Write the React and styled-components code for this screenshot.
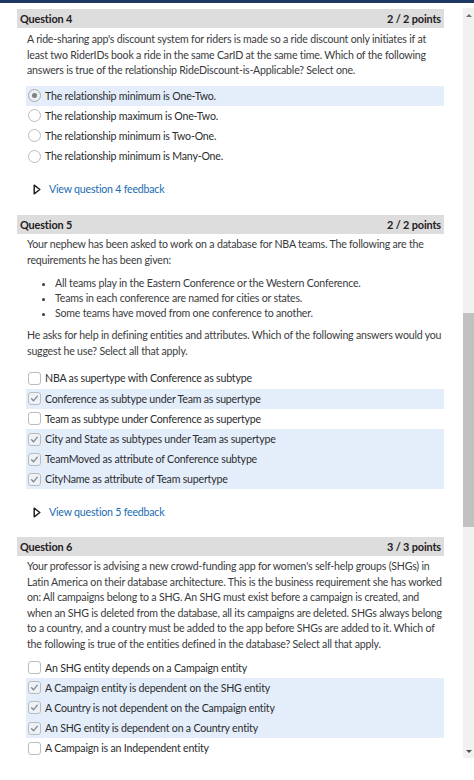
import React from "react";
import styled, { createGlobalStyle } from "styled-components";

const GlobalStyle = createGlobalStyle`
  html, body { margin: 0; padding: 0; background: #ffffff; }
  body {
    font-family: Lato, "Noto Sans", "Liberation Sans", sans-serif;
    color: #3a3b3d;
    overflow: hidden;
  }
`;

const Page = styled.div`
  width: 474px;
  height: 780px;
  display: flex;
  flex-direction: column;
  overflow: hidden;
  background: #fff;
`;

const TopBar = styled.div`
  height: 3px;
  flex: none;
  background: #1d3763;
`;

const Body = styled.div`
  flex: 1;
  display: flex;
  min-height: 0;
`;

const Content = styled.main`
  flex: 1;
  padding: 6px 19px 0 17px;
  overflow: hidden;
  font-size: 10.6px;
  letter-spacing: -0.2px;
`;

const Question = styled.section`
  margin-bottom: ${(p) => p.$gap || 17}px;
`;

const Header = styled.div`
  height: 19px;
  display: flex;
  align-items: center;
  justify-content: space-between;
  padding: 0 3px;
  background: #dddddd;
  font-size: 10.9px;
  letter-spacing: -0.15px;
  font-weight: 700;
  color: #1f2022;
`;

const QBody = styled.div`
  padding: ${(p) => p.$pt || 3}px 0 0 9px;
`;

const Para = styled.p`
  margin: 0 0 ${(p) => p.$mb || 5}px 1px;
  line-height: 15.5px;
  color: #3a3b3d;
`;

const Bullets = styled.ul`
  margin: 8px 0 8px 0;
  padding-left: 29px;
  line-height: 14.7px;
  color: #3a3b3d;
`;

const Options = styled.div`
  display: flex;
  flex-direction: column;
`;

const Row = styled.label`
  display: flex;
  align-items: center;
  gap: 4px;
  height: 20.2px;
  padding-left: 2px;
  background: ${(p) => (p.$on ? "#e4eefa" : "transparent")};
  color: #2b2c2e;
`;

const Radio = styled.span`
  width: 13px;
  height: 13px;
  box-sizing: border-box;
  border-radius: 50%;
  border: 1px solid ${(p) => (p.$on ? "#a4a8ad" : "#b9bcbf")};
  background: ${(p) => (p.$on ? "#edf0f3" : "#fff")};
  display: flex;
  align-items: center;
  justify-content: center;
  flex: none;
`;

const Dot = styled.span`
  width: 5px;
  height: 5px;
  border-radius: 50%;
  background: #7b8086;
`;

const Box = styled.span`
  width: 13px;
  height: 13px;
  box-sizing: border-box;
  border-radius: 3px;
  border: 1px solid #b9bcbf;
  background: ${(p) => (p.$on ? "#eef1f5" : "#fff")};
  display: flex;
  align-items: center;
  justify-content: center;
  flex: none;
`;

const Feedback = styled.div`
  display: flex;
  align-items: center;
  gap: 8px;
  margin: 15px 0 0 7px;
  height: 16px;
  color: #1a6bb3;
`;

const Scrollbar = styled.div`
  width: 11px;
  flex: none;
  margin-top: 5px;
  margin-bottom: 22px;
  background: #f1f1f1;
  display: flex;
  flex-direction: column;
`;

const Arrow = styled.div`
  height: 14px;
  flex: none;
  display: flex;
  align-items: center;
  justify-content: center;
  &::before {
    content: "";
    width: 0;
    height: 0;
    border-left: 3px solid transparent;
    border-right: 3px solid transparent;
    ${(p) =>
      p.$down
        ? "border-top: 3px solid #505050;"
        : "border-bottom: 3px solid #707070;"}
  }
`;

const Track = styled.div`
  flex: 1;
  display: flex;
  flex-direction: column;
`;

const Thumb = styled.div`
  margin-top: ${(p) => p.$top}px;
  height: ${(p) => p.$h}px;
  background: #c1c1c1;
`;

const Check = () => (
  <svg width="9" height="9" viewBox="0 0 9 9">
    <polyline
      points="1.6,4.8 3.5,6.8 7.4,2.2"
      fill="none"
      stroke="#7d8893"
      strokeWidth="1.3"
      strokeLinecap="round"
      strokeLinejoin="round"
    />
  </svg>
);

const Tri = () => (
  <svg width="8" height="11" viewBox="0 0 8 11">
    <polygon
      points="1.2,1.2 6.8,5.5 1.2,9.8"
      fill="none"
      stroke="#202124"
      strokeWidth="1.5"
      strokeLinejoin="round"
    />
  </svg>
);

const RadioRow = ({ on, children }) => (
  <Row $on={on}>
    <Radio $on={on}>{on && <Dot />}</Radio>
    {children}
  </Row>
);

const CheckRow = ({ on, children }) => (
  <Row $on={on}>
    <Box $on={on}>{on && <Check />}</Box>
    {children}
  </Row>
);

export default function App() {
  return (
    <>
      <GlobalStyle />
      <Page>
        <TopBar />
        <Body>
          <Content>
            <Question $gap={18}>
              <Header>
                <span>Question 4</span>
                <span>2 / 2 points</span>
              </Header>
              <QBody $pt={4}>
                <Para $mb={7}>
                  A ride-sharing app's discount system for riders is made so a
                  ride discount only initiates if at least two RiderIDs book a
                  ride in the same CarID at the same time. Which of the
                  following answers is true of the relationship
                  RideDiscount-is-Applicable? Select one.
                </Para>
                <Options>
                  <RadioRow on>The relationship minimum is One-Two.</RadioRow>
                  <RadioRow>The relationship maximum is One-Two.</RadioRow>
                  <RadioRow>The relationship minimum is Two-One.</RadioRow>
                  <RadioRow>The relationship minimum is Many-One.</RadioRow>
                </Options>
                <Feedback>
                  <Tri />
                  <span>View question 4 feedback</span>
                </Feedback>
              </QBody>
            </Question>

            <Question $gap={17}>
              <Header>
                <span>Question 5</span>
                <span>2 / 2 points</span>
              </Header>
              <QBody>
                <Para $mb={0}>
                  Your nephew has been asked to work on a database for NBA
                  teams. The following are the requirements he has been given:
                </Para>
                <Bullets>
                  <li>
                    All teams play in the Eastern Conference or the Western
                    Conference.
                  </li>
                  <li>Teams in each conference are named for cities or states.</li>
                  <li>Some teams have moved from one conference to another.</li>
                </Bullets>
                <Para $mb={9}>
                  He asks for help in defining entities and attributes. Which of
                  the following answers would you suggest he use? Select all
                  that apply.
                </Para>
                <Options>
                  <CheckRow>NBA as supertype with Conference as subtype</CheckRow>
                  <CheckRow on>Conference as subtype under Team as supertype</CheckRow>
                  <CheckRow>Team as subtype under Conference as supertype</CheckRow>
                  <CheckRow on>City and State as subtypes under Team as supertype</CheckRow>
                  <CheckRow on>TeamMoved as attribute of Conference subtype</CheckRow>
                  <CheckRow on>CityName as attribute of Team supertype</CheckRow>
                </Options>
                <Feedback>
                  <Tri />
                  <span>View question 5 feedback</span>
                </Feedback>
              </QBody>
            </Question>

            <Question>
              <Header>
                <span>Question 6</span>
                <span>3 / 3 points</span>
              </Header>
              <QBody>
                <Para $mb={5}>
                  Your professor is advising a new crowd-funding app for
                  women's self-help groups (SHGs) in Latin America on their
                  database architecture. This is the business requirement she
                  has worked on: All campaigns belong to a SHG. An SHG must exist
                  before a campaign is created, and when an SHG is deleted from
                  the database, all its campaigns are deleted. SHGs always
                  belong to a country, and a country must be added to the app
                  before SHGs are added to it. Which of the following is true of
                  the entities defined in the database? Select all that apply.
                </Para>
                <Options>
                  <CheckRow>An SHG entity depends on a Campaign entity</CheckRow>
                  <CheckRow on>A Campaign entity is dependent on the SHG entity</CheckRow>
                  <CheckRow on>A Country is not dependent on the Campaign entity</CheckRow>
                  <CheckRow on>An SHG entity is dependent on a Country entity</CheckRow>
                  <CheckRow>A Campaign is an Independent entity</CheckRow>
                </Options>
              </QBody>
            </Question>
          </Content>
          <Scrollbar>
            <Arrow />
            <Track>
              <Thumb $top={291} $h={214} />
            </Track>
            <Arrow $down />
          </Scrollbar>
        </Body>
      </Page>
    </>
  );
}
